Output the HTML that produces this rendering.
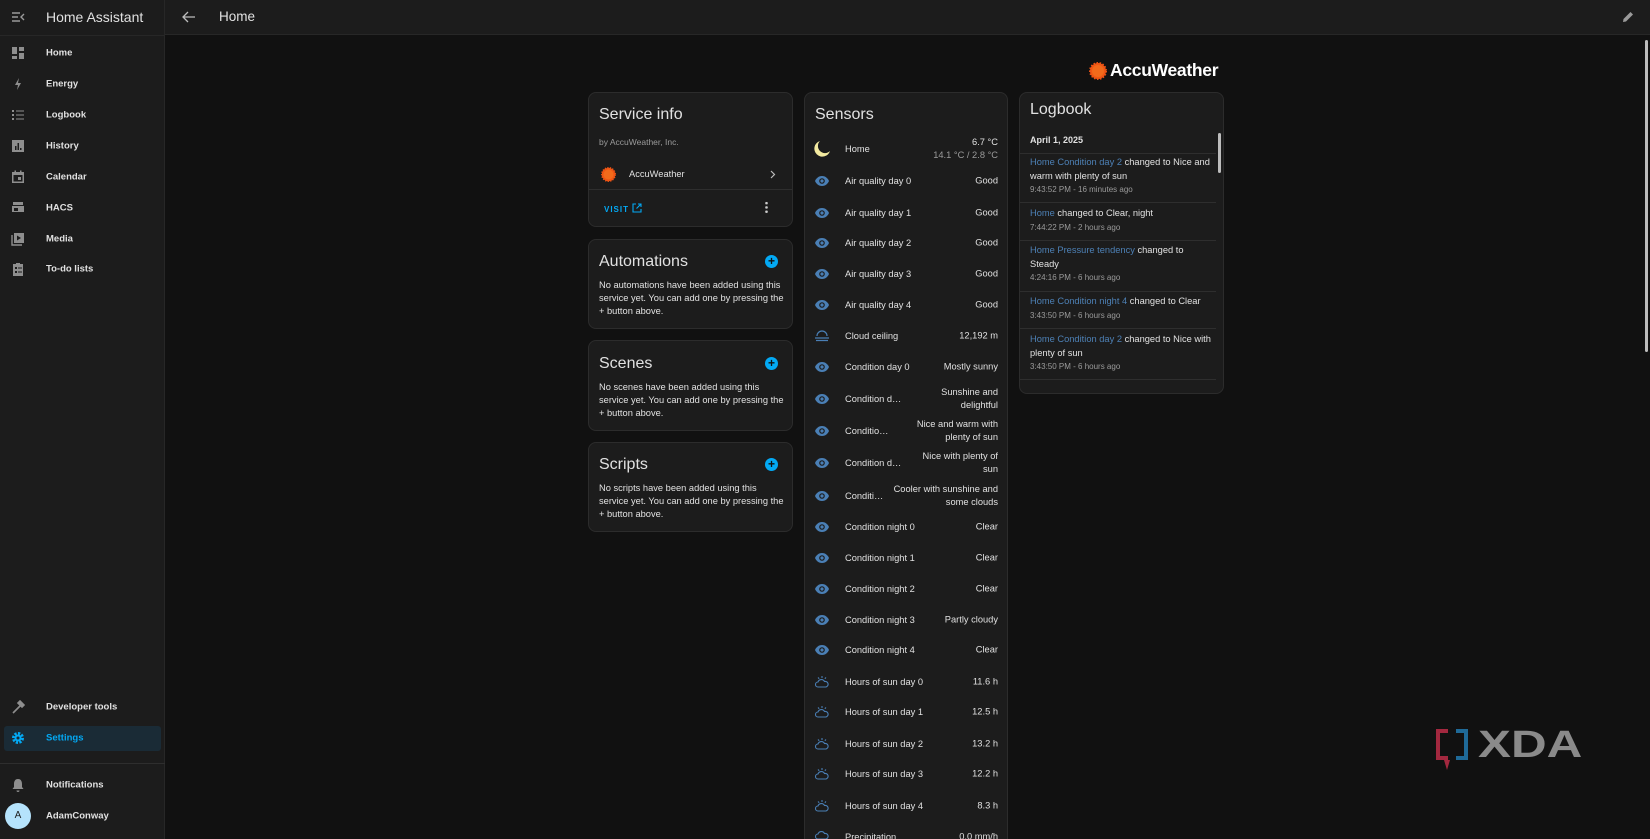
<!DOCTYPE html>
<html><head><meta charset="utf-8">
<style>
*{box-sizing:border-box;margin:0;padding:0}
html{width:1650px;height:839px;overflow:hidden;background:#111111}
body{width:1650px;height:839px;overflow:hidden;background:#111111;font-family:"Liberation Sans",sans-serif;color:#e1e1e1;position:relative}
.a{position:absolute;white-space:nowrap}
#side{position:absolute;left:0;top:0;width:165px;height:839px;background:#1c1c1c;border-right:1px solid #272727}
#top{position:absolute;left:165px;top:0;right:0;height:35px;background:#1c1c1c;border-bottom:1px solid #272727}
.nav{position:absolute;left:46px;font-size:9.5px;font-weight:bold;color:#e1e1e1;transform:translateY(-50%)}
.ic{position:absolute;left:11px;width:14px;height:14px;transform:translateY(-50%)}
.card{position:absolute;background:#1c1c1c;border:1px solid #2c2c2c;border-radius:8px}
.h{position:absolute;font-size:16px;color:#e1e1e1;transform:translateY(-50%)}
.t{position:absolute;font-size:9.3px;color:#e1e1e1;line-height:13px}
.sr{position:absolute;left:0;width:203px;height:20px;transform:translateY(-50%)}
.sr .n{position:absolute;left:40px;top:50%;transform:translateY(-50%);font-size:9.3px;color:#e1e1e1}
.sr .v{position:absolute;right:10px;top:50%;transform:translateY(-50%);font-size:9.3px;color:#e1e1e1;text-align:right;line-height:13px}
.sr svg{position:absolute;left:10px;top:50%;transform:translateY(-50%)}
.lb{position:absolute;left:10px;font-size:9.3px;line-height:13.5px;color:#e1e1e1;white-space:nowrap}
.lb b{font-weight:normal;color:#4d80b5}
.lb .tm{font-size:8px;color:#9b9b9b}
.sep{position:absolute;left:0;width:196px;height:1px;background:#2e2e2e}
.plus{position:absolute;width:13px;height:13px;border-radius:50%;background:#03a9f4;color:#111;font-size:12px;font-weight:bold;line-height:13px;text-align:center}
</style></head><body>

<div id="side">
  <svg class="a" style="left:11px;top:11px" width="14" height="12" viewBox="0 0 14 12"><path d="M1 2h8M1 6h6M1 10h8M13 3l-3 3 3 3" stroke="#9a9a9a" stroke-width="1.4" fill="none"/></svg>
  <div class="a" style="left:46px;top:9px;font-size:14px;color:#e1e1e1">Home Assistant</div>
  <div style="position:absolute;left:0;top:35px;width:165px;height:1px;background:#272727"></div>

  <svg class="ic" style="top:53px" viewBox="0 0 14 14"><path d="M1 1h5v7H1zM8 1h5v4H8zM8 7h5v6H8zM1 10h5v3H1z" fill="#8e8e8e"/></svg>
  <div class="nav" style="top:53px">Home</div>
  <svg class="ic" style="top:84px" viewBox="0 0 14 14"><path d="M8 1L4 8h3l-1 5 4-7H7z" fill="#8e8e8e"/></svg>
  <div class="nav" style="top:84px">Energy</div>
  <svg class="ic" style="top:115px" viewBox="0 0 14 14"><path d="M1 2h2v2H1zM1 6h2v2H1zM1 10h2v2H1zM5 2.5h8v1H5zM5 6.5h8v1H5zM5 10.5h8v1H5z" fill="#8e8e8e"/></svg>
  <div class="nav" style="top:115px">Logbook</div>
  <svg class="ic" style="top:146px" viewBox="0 0 14 14"><path d="M1 1h12v12H1z" fill="#8e8e8e"/><path d="M4 7h1.5v4H4zM6.5 4h1.5v7H6.5zM9 9h1.5v2H9z" fill="#1c1c1c"/></svg>
  <div class="nav" style="top:146px">History</div>
  <svg class="ic" style="top:177px" viewBox="0 0 14 14"><path d="M1 2h12v11H1z" fill="#8e8e8e"/><path d="M2.5 5h9v6.5h-9z" fill="#1c1c1c"/><path d="M7 7h3v3H7zM3.5 0.5h1.5v2H3.5zM9 0.5h1.5v2H9z" fill="#8e8e8e"/></svg>
  <div class="nav" style="top:177px">Calendar</div>
  <svg class="ic" style="top:208px" viewBox="0 0 14 14"><path d="M2 1h10v3H2zM1 5h12v6H1z" fill="#8e8e8e"/><path d="M3 7h4v3H3z" fill="#1c1c1c"/></svg>
  <div class="nav" style="top:208px">HACS</div>
  <svg class="ic" style="top:239px" viewBox="0 0 14 14"><path d="M3 1h10v10H3z" fill="#8e8e8e"/><path d="M1 3v10h10" stroke="#8e8e8e" stroke-width="1.4" fill="none"/><path d="M6 3.5l4 2.5-4 2.5z" fill="#1c1c1c"/></svg>
  <div class="nav" style="top:239px">Media</div>
  <svg class="ic" style="top:269px" viewBox="0 0 14 14"><path d="M2 2h10v12H2z" fill="#8e8e8e"/><path d="M5 1h4v2H5z" fill="#8e8e8e"/><path d="M4 5h2v2H4zM7 5.5h4v1H7zM4 9h2v2H4zM7 9.5h4v1H7z" fill="#1c1c1c"/></svg>
  <div class="nav" style="top:269px">To-do lists</div>

  <svg class="ic" style="top:707px" viewBox="0 0 14 14"><path d="M2 13l7-7M7 3l4 4 2-2-4-4z" stroke="#8e8e8e" stroke-width="1.6" fill="#8e8e8e"/></svg>
  <div class="nav" style="top:707px">Developer tools</div>
  <div style="position:absolute;left:4px;top:726px;width:157px;height:25px;background:#1a2b36;border-radius:3px"></div>
  <svg class="ic" style="top:738px" viewBox="0 0 14 14"><circle cx="7" cy="7" r="4.5" fill="none" stroke="#03a9f4" stroke-width="3" stroke-dasharray="2.2 1.3"/><circle cx="7" cy="7" r="3.5" fill="#03a9f4"/><circle cx="7" cy="7" r="1.5" fill="#1a2b36"/></svg>
  <div class="nav" style="top:738px;color:#03a9f4">Settings</div>
  <div style="position:absolute;left:0;top:763px;width:165px;height:1px;background:#2e2e2e"></div>
  <svg class="ic" style="top:785px" viewBox="0 0 14 14"><path d="M7 1c-3 0-4 2.5-4 5v3l-1.5 2h11L11 9V6c0-2.5-1-5-4-5zM5.5 12.5h3a1.5 1.5 0 01-3 0z" fill="#8e8e8e"/></svg>
  <div class="nav" style="top:785px">Notifications</div>
  <div style="position:absolute;left:5px;top:803px;width:26px;height:26px;border-radius:50%;background:#b5e3fc;color:#1c1c1c;font-size:10px;text-align:center;line-height:26px">A</div>
  <div class="nav" style="top:816px">AdamConway</div>
</div>

<div id="top">
  <svg class="a" style="left:17px;top:11px" width="14" height="12" viewBox="0 0 14 12"><path d="M13 6H2M6 1L1 6l5 5" stroke="#bdbdbd" stroke-width="1.3" fill="none"/></svg>
  <div class="a" style="left:54px;top:9px;font-size:13.5px;color:#e1e1e1">Home</div>
  <svg class="a" style="left:1457px;top:11px" width="12" height="12" viewBox="0 0 12 12"><path d="M1 11l.5-3L8.5 1l2.5 2.5-7 7z" fill="#9a9a9a"/></svg>
</div>
<div style="position:absolute;right:2px;top:40px;width:3px;height:312px;background:#bdbdbd;border-radius:2px"></div>

<svg class="a" style="left:1089px;top:62px" width="18" height="18" viewBox="0 0 18 18"><circle cx="9" cy="9" r="8" fill="#f05514" stroke="#f05514" stroke-dasharray="1.5 1.5" stroke-width="2"/><circle cx="9" cy="9" r="6" fill="#f26a1b"/></svg>
<div class="a" style="left:1110px;top:60px;font-size:17.5px;font-weight:bold;color:#fff;letter-spacing:-0.3px">AccuWeather</div>

<div class="card" style="left:588px;top:92px;width:205px;height:135px">
  <div class="h" style="left:10px;top:22px">Service info</div>
  <div class="a" style="left:10px;top:44px;font-size:8.5px;color:#9b9b9b">by AccuWeather, Inc.</div>
  <svg class="a" style="left:12px;top:74px" width="15" height="15" viewBox="0 0 18 18"><circle cx="9" cy="9" r="8" fill="#f05514" stroke="#f05514" stroke-dasharray="1.5 1.5" stroke-width="2"/><circle cx="9" cy="9" r="6" fill="#f26a1b"/></svg>
  <div class="a" style="left:40px;top:76px;font-size:9.3px">AccuWeather</div>
  <svg class="a" style="left:181px;top:77px" width="6" height="9" viewBox="0 0 6 9"><path d="M1 1l3.5 3.5L1 8" stroke="#bdbdbd" stroke-width="1.2" fill="none"/></svg>
  <div style="position:absolute;left:0;top:96px;width:203px;height:1px;background:#2e2e2e"></div>
  <div class="a" style="left:15px;top:112px;font-size:8px;font-weight:bold;color:#03a9f4;letter-spacing:1px">VISIT</div>
  <svg class="a" style="left:43px;top:110px" width="10" height="10" viewBox="0 0 10 10"><path d="M4 1H1v8h8V6M6 1h3v3M9 1L4.5 5.5" stroke="#03a9f4" stroke-width="1.1" fill="none"/></svg>
  <div class="a" style="left:176px;top:108px;width:3px;height:13px;background:radial-gradient(circle,#ccc 1.2px,transparent 1.4px) 0 0/3px 4.3px"></div>
</div>

<div class="card" style="left:588px;top:239px;width:205px;height:90px">
  <div class="h" style="left:10px;top:22px">Automations</div>
  <div class="plus" style="left:176px;top:15px">+</div>
  <div class="t" style="left:10px;top:39px">No automations have been added using this<br>service yet. You can add one by pressing the<br>+ button above.</div>
</div>
<div class="card" style="left:588px;top:340px;width:205px;height:91px">
  <div class="h" style="left:10px;top:23px">Scenes</div>
  <div class="plus" style="left:176px;top:16px">+</div>
  <div class="t" style="left:10px;top:40px">No scenes have been added using this<br>service yet. You can add one by pressing the<br>+ button above.</div>
</div>
<div class="card" style="left:588px;top:442px;width:205px;height:90px">
  <div class="h" style="left:10px;top:22px">Scripts</div>
  <div class="plus" style="left:176px;top:15px">+</div>
  <div class="t" style="left:10px;top:39px">No scripts have been added using this<br>service yet. You can add one by pressing the<br>+ button above.</div>
</div>

<div class="card" style="left:804px;top:92px;width:204px;height:747px;border-bottom:none;border-radius:8px 8px 0 0;overflow:hidden">
  <div class="h" style="left:10px;top:22px">Sensors</div>
  <div class="sr" style="top:56px">
    <svg width="18" height="18" viewBox="0 0 18 18" style="left:8px"><path d="M7 1a8 8 0 1010 10A7 7 0 017 1z" fill="#f3eaa0"/></svg>
    <div class="n">Home</div>
    <div class="v" style="right:10px">6.7 °C<br><span style="color:#9b9b9b">14.1 °C / 2.8 °C</span></div>
  </div>
  <div id="rows"></div>
</div>

<div class="card" style="left:1019px;top:92px;width:205px;height:302px">
  <div class="a" style="left:10px;top:8px;font-size:16px;color:#e1e1e1">Logbook</div>
  <div class="a" style="left:10px;top:42px;font-size:9px;font-weight:bold">April 1, 2025</div>
  <div class="sep" style="top:60px"></div>
  <div class="lb" style="top:63px"><b>Home Condition day 2</b> changed to Nice and<br>warm with plenty of sun<br><span class="tm">9:43:52 PM - 16 minutes ago</span></div>
  <div class="sep" style="top:109px"></div>
  <div class="lb" style="top:114px"><b>Home</b> changed to Clear, night<br><span class="tm">7:44:22 PM - 2 hours ago</span></div>
  <div class="sep" style="top:147px"></div>
  <div class="lb" style="top:151px"><b>Home Pressure tendency</b> changed to<br>Steady<br><span class="tm">4:24:16 PM - 6 hours ago</span></div>
  <div class="sep" style="top:198px"></div>
  <div class="lb" style="top:202px"><b>Home Condition night 4</b> changed to Clear<br><span class="tm">3:43:50 PM - 6 hours ago</span></div>
  <div class="sep" style="top:235px"></div>
  <div class="lb" style="top:240px"><b>Home Condition day 2</b> changed to Nice with<br>plenty of sun<br><span class="tm">3:43:50 PM - 6 hours ago</span></div>
  <div class="sep" style="top:286px"></div>
  <div style="position:absolute;left:198px;top:40px;width:3px;height:40px;background:#bdbdbd;border-radius:2px"></div>
</div>

<div class="a" style="left:1436px;top:729px;width:12px;height:31px;border:4px solid #a3283f;border-right:none"></div>
<div class="a" style="left:1444px;top:760px;width:0;height:0;border-left:3px solid transparent;border-right:3px solid transparent;border-top:10px solid #a3283f"></div>
<div class="a" style="left:1456px;top:729px;width:12px;height:31px;border:4px solid #1f6a98;border-left:none"></div>
<div class="a" style="left:1478px;top:724px;font-size:38px;font-weight:bold;color:#8a8a8a;transform:scaleX(1.3);transform-origin:left">XDA</div>

<script>
var rows=[
["eye","Air quality day 0","Good",180],
["eye","Air quality day 1","Good",212],
["eye","Air quality day 2","Good",242],
["eye","Air quality day 3","Good",273],
["eye","Air quality day 4","Good",304],
["cloud","Cloud ceiling","12,192 m",335],
["eye","Condition day 0","Mostly sunny",366],
["eye","Condition d…","Sunshine and<br>delightful",398],
["eye","Conditio…","Nice and warm with<br>plenty of sun",430],
["eye","Condition d…","Nice with plenty of<br>sun",462],
["eye","Conditi…","Cooler with sunshine and<br>some clouds",495],
["eye","Condition night 0","Clear",526],
["eye","Condition night 1","Clear",557],
["eye","Condition night 2","Clear",588],
["eye","Condition night 3","Partly cloudy",619],
["eye","Condition night 4","Clear",649],
["sun","Hours of sun day 0","11.6 h",681],
["sun","Hours of sun day 1","12.5 h",711],
["sun","Hours of sun day 2","13.2 h",743],
["sun","Hours of sun day 3","12.2 h",773],
["sun","Hours of sun day 4","8.3 h",805],
["rain","Precipitation","0.0 mm/h",836]];
var icons={
eye:'<svg width="14" height="10" viewBox="0 0 14 10"><path d="M7 0C3.5 0 1 2.5 0 5c1 2.5 3.5 5 7 5s6-2.5 7-5C13 2.5 10.5 0 7 0z" fill="#4a7fb5"/><circle cx="7" cy="5" r="2.8" fill="#1c1c1c"/><circle cx="7" cy="5" r="1.6" fill="#4a7fb5"/></svg>',
cloud:'<svg width="14" height="12" viewBox="0 0 14 12"><path d="M2 6a5 5 0 0110 0M0 8h14M1 10.5h12" stroke="#4a7fb5" stroke-width="1.2" fill="none"/></svg>',
sun:'<svg width="14" height="14" viewBox="0 0 14 14"><path d="M3 12a2.5 2.5 0 010-5 3.5 3.5 0 016.5-.5A2.5 2.5 0 0111 12z" stroke="#4a7fb5" stroke-width="1.1" fill="none"/><path d="M7 1v2M3 2.5l1.2 1.2M11 2.5L9.8 3.7" stroke="#4a7fb5" stroke-width="1.1"/></svg>',
rain:'<svg width="14" height="12" viewBox="0 0 14 12"><path d="M3 8a2.5 2.5 0 010-5 3.5 3.5 0 016.5-.5A2.5 2.5 0 0111 8z" stroke="#4a7fb5" stroke-width="1.1" fill="none"/></svg>'};
var h='';
rows.forEach(function(r){h+='<div class="sr" style="top:'+(r[3]-92)+'px">'+icons[r[0]]+'<div class="n">'+r[1]+'</div><div class="v">'+r[2]+'</div></div>';});
document.getElementById('rows').outerHTML=h;
</script>
</body></html>
